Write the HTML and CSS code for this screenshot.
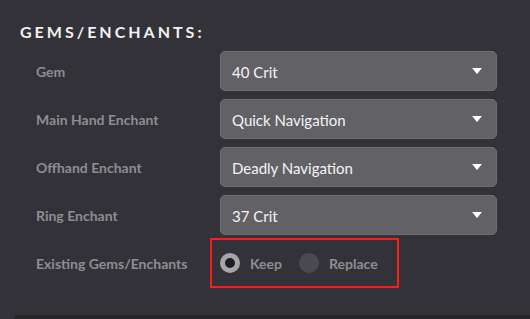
FILE: index.html
```html
<!DOCTYPE html>
<html lang="en">
<head>
    <meta charset="UTF-8" />
    <title>Gems / Enchants</title>
    <link rel="stylesheet" href="styles.css">
</head>
<body>
    <div class="panel">
        <h2>Gems/Enchants:</h2>

        <!-- gem and enchant choices -->
        <form class="options">
            <label for="gem">Gem</label>
            <div class="select">
                <select id="gem">
                    <option>40 Crit</option>
                </select>
            </div>

            <label for="mainhand">Main Hand Enchant</label>
            <div class="select">
                <select id="mainhand">
                    <option>Quick Navigation</option>
                </select>
            </div>

            <label for="offhand">Offhand Enchant</label>
            <div class="select">
                <select id="offhand">
                    <option>Deadly Navigation</option>
                </select>
            </div>

            <label for="ring">Ring Enchant</label>
            <div class="select">
                <select id="ring">
                    <option>37 Crit</option>
                </select>
            </div>

            <label>Existing Gems/Enchants</label>
            <div class="radios">
                <label class="radio"><input type="radio" name="existing" checked> Keep</label>
                <label class="radio"><input type="radio" name="existing"> Replace</label>
            </div>
        </form>
    </div>

    <div class="next-panel"></div>
</body>
</html>
```

FILE: styles.css
```css
body {
    margin: 0;
    background: #333238;
    font-family: Lato, 'Open Sans', sans-serif;
    overflow: hidden;
}

.panel {
    padding: 22px 20px 0 20px;
    height: 293px;
    box-sizing: border-box;
}

h2 {
    margin: 0;
    font-size: 16px;
    font-weight: bold;
    line-height: 1.2;
    letter-spacing: 3px;
    text-transform: uppercase;
    color: #f2f2f4;
}

/* label column + field column */
.options {
    display: grid;
    grid-template-columns: 184px 277px;
    grid-auto-rows: 40px;
    row-gap: 8px;
    margin-top: 10px;
    padding-left: 16px;
}

.options > label {
    align-self: center;
    font-size: 14px;
    font-weight: bold;
    color: #8e8d92;
}

.select {
    position: relative;
}

.select select {
    appearance: none;
    width: 100%;
    height: 40px;
    margin: 0;
    padding: 2px 12px 0 11px;
    background: #626166;
    border: 1px solid #6f6e74;
    border-radius: 5px;
    font-family: Lato, sans-serif;
    font-size: 15px;
    color: #f4f4f6;
    outline: none;
}

.select::after {
    content: "";
    position: absolute;
    right: 15px;
    top: 17px;
    border-left: 5px solid transparent;
    border-right: 5px solid transparent;
    border-top: 6px solid #ffffff;
    pointer-events: none;
}

.radios {
    display: flex;
    align-items: center;
    justify-self: start;
    margin-left: -5px;
    padding: 0 16px 0 5px;
    outline: 2px solid #fb1c1c;
    outline-offset: 3px;
}

.radio {
    display: flex;
    align-items: center;
    margin-right: 17px;
    font-size: 14px;
    font-weight: bold;
    color: #8e8d92;
}

.radio:last-child {
    margin-right: 0;
}

.radio input {
    appearance: none;
    width: 20px;
    height: 20px;
    margin: 0 10px 0 0;
    border-radius: 50%;
    background: #4b4a50;
}

.radio input:checked {
    background: #1f1e22;
    border: 5px solid #a6a5a8;
    box-sizing: border-box;
}

.next-panel {
    margin-left: 14px;
    height: 4px;
    margin-top: 22px;
    background: #262628;
    border-top-left-radius: 6px;
}
```
